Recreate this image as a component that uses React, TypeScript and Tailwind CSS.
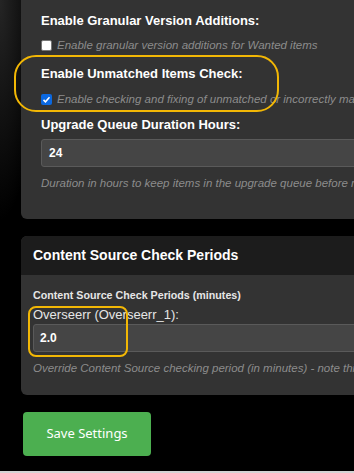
export default function App() {
  return (
    <div className="relative h-[473px] w-[354px] overflow-hidden bg-black bg-[radial-gradient(40px_220px_at_0_0,#252525,#000)] font-['Liberation_Sans',Arial,sans-serif]">
      <div className="ml-[21px] w-[360px] rounded-b-md bg-[#333333] pl-5 pt-[13px] pb-[29px]">
        <div className="text-[13px] leading-[16px] font-bold text-white">Enable Granular Version Additions:</div>
        <label className="mt-[9px] flex h-[14px] items-center gap-[5px]">
          <span className="h-[11px] w-[11px] shrink-0 rounded-[2px] border border-[#767676] bg-white" />
          <span className="whitespace-nowrap text-[11.5px] leading-[14px] italic text-[#8c8c8c]">Enable granular version additions for Wanted items</span>
        </label>

        <div className="relative mt-[14px]">
          <div className="absolute left-[-27px] top-[-11px] h-[57px] w-[265px] rounded-[22px] border-2 border-[#f2b705]" />
          <div className="text-[13px] leading-[16px] font-bold text-white">Enable Unmatched Items Check:</div>
          <label className="mt-[10px] flex h-[14px] items-center gap-[5px]">
            <span className="flex h-[11px] w-[11px] shrink-0 items-center justify-center rounded-[2px] bg-[#0b68e0]">
              <svg viewBox="0 0 12 12" className="h-[9px] w-[9px]" fill="none" stroke="white" strokeWidth="2">
                <path d="M2 6.5l2.6 2.6L10 3" />
              </svg>
            </span>
            <span className="whitespace-nowrap text-[11.5px] leading-[14px] italic text-[#8c8c8c]">Enable checking and fixing of unmatched or incorrectly matched items</span>
          </label>
        </div>

        <div className="mt-[11px] text-[13px] leading-[16px] font-bold text-white">Upgrade Queue Duration Hours:</div>
        <div className="mt-[6px] flex h-[28px] items-center rounded-[3px] border border-[#5a5a5a] bg-[#454545] px-[7px] text-[12px] font-bold text-white">24</div>
        <div className="mt-[9px] whitespace-nowrap text-[11.5px] leading-[14px] italic text-[#8c8c8c]">Duration in hours to keep items in the upgrade queue before removal</div>
      </div>

      <div className="ml-[21px] mt-[17px] w-[360px] overflow-hidden rounded-md bg-[#333333]">
        <div className="flex h-[39px] items-center bg-[#1c1c1c] px-3 text-[14px] font-bold text-white">Content Source Check Periods</div>
        <div className="px-3 pt-[13px] pb-[20px]">
          <div className="text-[10.7px] leading-[14px] font-bold text-[#e6e6e6]">Content Source Check Periods (minutes)</div>
          <div className="relative mt-[5px]">
            <div className="absolute left-[-5px] top-[-1px] h-[51px] w-[100px] rounded-[8px] border-2 border-[#f2b705]" />
            <div className="text-[13px] leading-[16px] text-[#e6e6e6]">Overseerr (Overseerr_1):</div>
            <div className="mt-[1px] flex h-[28px] items-center rounded-[3px] border border-[#5a5a5a] bg-[#454545] px-[6px] text-[12px] font-bold text-white">2.0</div>
          </div>
          <div className="mt-[9px] whitespace-nowrap text-[11.5px] leading-[14px] italic text-[#8c8c8c]">Override Content Source checking period (in minutes) - note this will override the default</div>
        </div>
      </div>

      <button className="ml-[23px] mt-[17px] flex h-[44px] w-[128px] items-center justify-center rounded-[4px] bg-[#4caf50] font-['Noto_Sans',sans-serif] text-[13px] text-white">
        Save Settings
      </button>

      <div className="absolute bottom-0 left-0 h-[2px] w-full bg-[#d4d4d4]" />
    </div>
  );
}
